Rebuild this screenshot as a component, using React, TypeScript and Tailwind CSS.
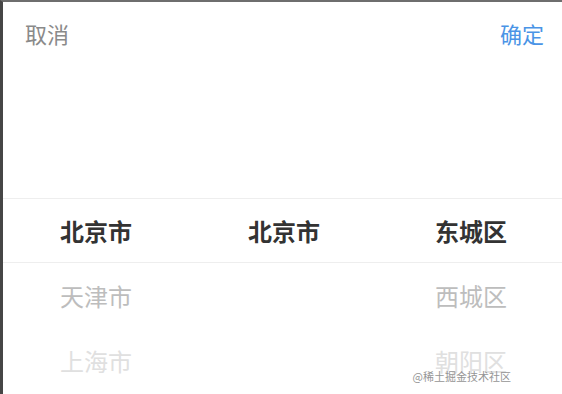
import React from 'react';

const columns = [
  ['北京市', '天津市', '上海市'],
  ['北京市', '', ''],
  ['东城区', '西城区', '朝阳区'],
];

const rowColor = ['text-[#333333] font-bold', 'text-[#bdbdbd]', 'text-[#e0e0e0]'];

export default function App() {
  return (
    <div
      className="relative w-[562px] h-[394px] overflow-hidden bg-white border-t-2 border-t-[#6e6e6e] border-l-[3px] border-l-[#464646]"
      style={{ fontFamily: '"Noto Sans CJK SC", "Noto Sans", sans-serif' }}
    >
      <div className="flex h-[66px] items-center justify-between pl-[22px] pr-[18px] pb-1 text-[22px]">
        <span className="text-[#8a8a8a]">取消</span>
        <span className="text-[#4a94e6]">确定</span>
      </div>

      <div className="relative">
        <div className="h-[130px]" />
        <div className="absolute left-0 right-0 top-[130px] h-[65px] border-y border-[#eeeeee]" />
        <div className="-ml-px grid w-[562px] grid-cols-[188px_188px_186px]">
          {columns.map((col, ci) => (
            <div key={ci} className="flex flex-col">
              {col.map((item, ri) => (
                <div
                  key={ri}
                  className={`flex h-[65px] items-center justify-center text-[24px] ${rowColor[ri]}`}
                >
                  {item}
                </div>
              ))}
            </div>
          ))}
        </div>
      </div>

      <div className="absolute right-[51px] bottom-[12px] text-[11px] leading-none text-[#8a8a8a] opacity-90">
        @稀土掘金技术社区
      </div>
    </div>
  );
}
